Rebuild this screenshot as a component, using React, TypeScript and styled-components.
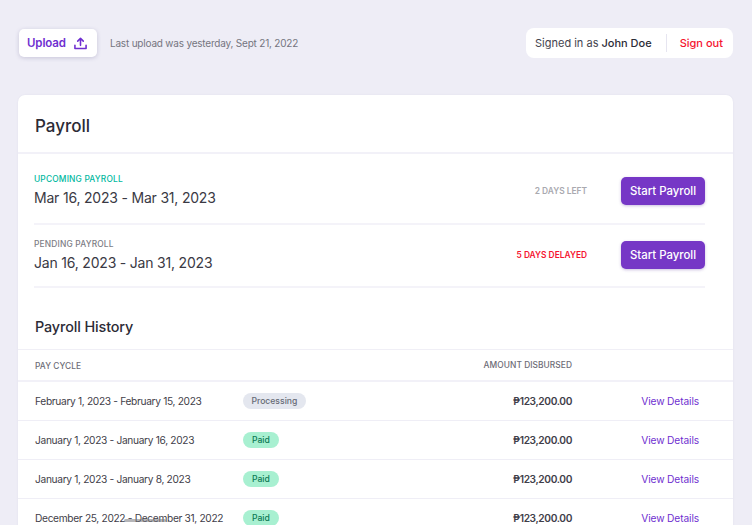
import React from "react";
import styled, { createGlobalStyle } from "styled-components";

const Global = createGlobalStyle`
  html, body { margin: 0; padding: 0; height: 525px; overflow: hidden; background: #eeedf6; }
  body { font-family: Inter, "Liberation Sans", sans-serif; color: #2c2b36; -webkit-font-smoothing: antialiased; }
  * { box-sizing: border-box; }
`;
const Page = styled.div`
  position: relative; width: 752px; height: 525px; overflow: hidden;
  padding: 28px 19px 0 18px;
`;
const TopBar = styled.header`
  display: flex; align-items: center; justify-content: space-between; height: 30px; margin-bottom: 37px;
`;
const UploadGroup = styled.div`display: flex; align-items: center; gap: 13px; padding-left: 1px;`;
const UploadButton = styled.button`
  display: flex; align-items: center; gap: 8px; width: 78px; height: 28px; padding: 0 0 0 8px;
  background: #fff; border: 0; border-radius: 5px; font: 600 11.5px Inter, sans-serif; letter-spacing: -.1px; color: #6f2fd0;
  box-shadow: 0 1px 4px rgba(70, 60, 120, .22);
`;
const UploadNote = styled.span`font-size: 10px; letter-spacing: -.2px; color: #75757f;`;
const Session = styled.div`
  display: flex; align-items: center; width: 207px; height: 30px; padding: 0 9px; background: #fff;
  border-radius: 8px; font-size: 11px; color: #44434e; white-space: nowrap;
  b { font-weight: 500; color: #2c2b36; margin-left: 3px; }
`;
const Divider = styled.span`width: 1px; height: 18px; background: #e6e5f0; margin: 0 13px 0 14px;`;
const SignOut = styled.span`color: #f5132f; font-weight: 500; white-space: nowrap;`;
const Card = styled.main`background: #fff; border-radius: 7px 7px 0 0; height: 440px; box-shadow: 0 0 2px rgba(70,60,120,.08);`;
const CardHead = styled.div`
  height: 59px; padding: 4px 17px 0; display: flex; align-items: center; border-bottom: 2px solid #f2f1f8;
  font-size: 17px; font-weight: 500;
`;
const Section = styled.section`margin: 0 28px 0 16px;`;
const PayRow = styled.div<{ $h: number; $top: number; $bottom?: number }>`
  height: ${(p) => p.$h}px; padding: ${(p) => p.$top}px 0 ${(p) => p.$bottom ?? 0}px; display: flex; align-items: center; justify-content: space-between;
  border-bottom: 2px solid #f4f3f9;
`;
const PayInfo = styled.div`display: flex; flex-direction: column; gap: 3px;`;
const Eyebrow = styled.span<{ $color: string }>`font-size: 8.4px; font-weight: 500; line-height: 11px; letter-spacing: .17px; color: ${(p) => p.$color};`;
const Range = styled.span`font-size: 14px; line-height: 19px; letter-spacing: -.2px; color: #3a3944;`;
const PayAction = styled.div<{ $drop?: number }>`display: flex; align-items: center; gap: 34px; padding-top: ${(p) => p.$drop ?? 0}px;`;
const Remain = styled.span<{ $color: string }>`font-size: 8.4px; font-weight: 600; color: ${(p) => p.$color};`;
const StartButton = styled.button`
  width: 84px; height: 28px; padding: 0; border: 0; border-radius: 5px; background: #7637c6; color: #fff;
  font: 500 11.4px Inter, sans-serif; box-shadow: 0 1px 3px rgba(80, 40, 150, .3);
`;
const HistoryTitle = styled.h2`
  margin: 0; height: 62px; padding: 29px 17px 0; font-size: 14.4px; line-height: 20px; font-weight: 500; letter-spacing: -.13px;
  border-bottom: 1px solid #f0eff6;
`;
const TableRow = styled.div<{ $head?: boolean }>`
  display: grid; grid-template-columns: 208px 218px 111px 1fr; align-items: center;
  height: 39px; padding-left: 17px; font-size: 10.2px; letter-spacing: -.33px; color: #3f3e49; white-space: nowrap;
  border-bottom: ${(p) => (p.$head ? "2px solid #f2f1f8" : "1px solid #efeef6")};
  ${(p) => p.$head && "height: 32px; padding-top: 2px; font-size: 8.4px; letter-spacing: .05px; font-weight: 500; color: #6d6c76;"}
`;
const Amount = styled.span<{ $head?: boolean }>`
  text-align: right; white-space: nowrap; font-weight: ${(p) => (p.$head ? 500 : 600)};
  ${(p) => (p.$head ? "position: relative; top: -1px;" : "letter-spacing: -.38px;")}
`;
const Pill = styled.span<{ $paid?: boolean }>`
  justify-self: start; height: 16px; padding: 0 ${(p) => (p.$paid ? 9 : 8.5)}px; border-radius: 8px; display: inline-flex; align-items: center;
  font-size: 8.6px; font-weight: 500; letter-spacing: 0;
  background: ${(p) => (p.$paid ? "#a8f0d1" : "#e4e7ef")};
  color: ${(p) => (p.$paid ? "#0c7a55" : "#666a75")};
`;
const ViewLink = styled.a`justify-self: end; margin-right: 34px; color: #6f2fd0; white-space: nowrap; letter-spacing: -.12px;`;
const Smudge = styled.div`
  position: absolute; left: 124px; top: 519px; width: 42px; height: 3px; border-radius: 2px; background: rgba(120,120,125,.55);
`;

const UploadIcon = () => (
  <svg width="13" height="13" viewBox="0 0 14 14" fill="none" stroke="#6f2fd0" strokeWidth="1.7" strokeLinecap="round" strokeLinejoin="round">
    <path d="M7 9V1.6M4 4.4l3-3 3 3M1 8.8v3.6h12V8.8" />
  </svg>
);

const rows = [
  ["February 1, 2023 - February 15, 2023", "Processing"],
  ["January 1, 2023 - January 16, 2023", "Paid"],
  ["January 1, 2023 - January 8, 2023", "Paid"],
  ["December 25, 2022 - December 31, 2022", "Paid"],
];

export default function App() {
  return (
    <Page>
      <Global />
      <TopBar>
        <UploadGroup>
          <UploadButton>Upload <UploadIcon /></UploadButton>
          <UploadNote>Last upload was yesterday, Sept 21, 2022</UploadNote>
        </UploadGroup>
        <Session>
          Signed in as <b>John Doe</b>
          <Divider />
          <SignOut>Sign out</SignOut>
        </Session>
      </TopBar>
      <Card>
        <CardHead>Payroll</CardHead>
        <Section>
          <PayRow $h={71} $top={3}>
            <PayInfo>
              <Eyebrow $color="#00b8a0">UPCOMING PAYROLL</Eyebrow>
              <Range>Mar 16, 2023 - Mar 31, 2023</Range>
            </PayInfo>
            <PayAction $drop={2}>
              <Remain $color="#a9a9af">2 DAYS LEFT</Remain>
              <StartButton>Start Payroll</StartButton>
            </PayAction>
          </PayRow>
          <PayRow $h={63} $top={0} $bottom={1}>
            <PayInfo>
              <Eyebrow $color="#7c7c84">PENDING PAYROLL</Eyebrow>
              <Range>Jan 16, 2023 - Jan 31, 2023</Range>
            </PayInfo>
            <PayAction>
              <Remain $color="#f5132f">5 DAYS DELAYED</Remain>
              <StartButton>Start Payroll</StartButton>
            </PayAction>
          </PayRow>
        </Section>
        <HistoryTitle>Payroll History</HistoryTitle>
        <TableRow $head>
          <span>PAY CYCLE</span>
          <span />
          <Amount $head>AMOUNT DISBURSED</Amount>
          <span />
        </TableRow>
        {rows.map(([cycle, status]) => (
          <TableRow key={cycle}>
            <span>{cycle}</span>
            <Pill $paid={status === "Paid"}>{status}</Pill>
            <Amount>₱123,200.00</Amount>
            <ViewLink>View Details</ViewLink>
          </TableRow>
        ))}
      </Card>
      <Smudge />
    </Page>
  );
}
